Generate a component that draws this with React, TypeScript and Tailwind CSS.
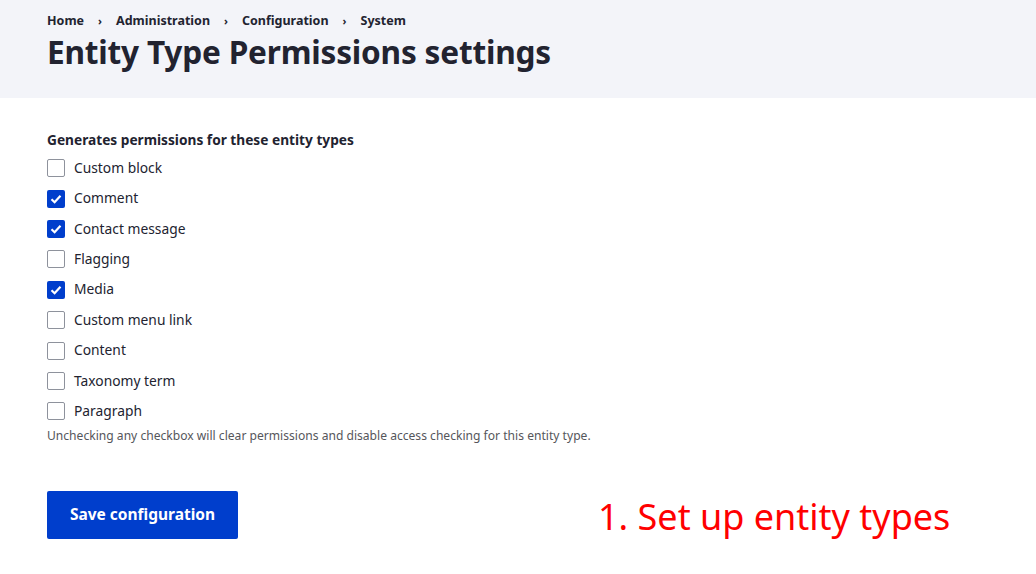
const FONT = "font-['Noto_Sans','Open_Sans',sans-serif]";

const types: { label: string; checked: boolean }[] = [
  { label: "Custom block", checked: false },
  { label: "Comment", checked: true },
  { label: "Contact message", checked: true },
  { label: "Flagging", checked: false },
  { label: "Media", checked: true },
  { label: "Custom menu link", checked: false },
  { label: "Content", checked: false },
  { label: "Taxonomy term", checked: false },
  { label: "Paragraph", checked: false },
];

function Checkbox({ checked }: { checked: boolean }) {
  if (checked) {
    return (
      <span className="flex h-[18px] w-[18px] items-center justify-center rounded-[2px] bg-[#003ecc]">
        <svg width="12" height="10" viewBox="0 0 12 10" fill="none">
          <path d="M1.5 5.2 4.6 8.2 10.5 1.8" stroke="#fff" strokeWidth="2.2" />
        </svg>
      </span>
    );
  }
  return <span className="h-[18px] w-[18px] rounded-[2px] border border-[#8e929c] bg-white" />;
}

export default function App() {
  return (
    <div className={`min-h-[574px] bg-white text-[#222330] ${FONT}`}>
      {/* Page header */}
      <div className="h-[98px] bg-[#f3f4f9] px-[47px] pt-[12px]">
        <nav className="flex items-center text-[12.5px] font-bold leading-[18px]">
          <span>Home</span>
          <span className="px-[14px] text-[11px]">›</span>
          <span>Administration</span>
          <span className="px-[14px] text-[11px]">›</span>
          <span>Configuration</span>
          <span className="px-[14px] text-[11px]">›</span>
          <span>System</span>
        </nav>
        <h1 className="mt-[2px] text-[31.6px] font-bold leading-[40px] tracking-[-0.2px]">
          Entity Type Permissions settings
        </h1>
      </div>

      {/* Form */}
      <div className="px-[47px] pt-[33px]">
        <div className="text-[13.7px] font-bold leading-[18px]">Generates permissions for these entity types</div>
        <div className="mt-[4px] flex flex-col">
          {types.map((t) => (
            <label key={t.label} className="flex h-[30.4px] items-center gap-[9px] text-[13.8px]">
              <Checkbox checked={t.checked} />
              <span>{t.label}</span>
            </label>
          ))}
        </div>
        <p className="mt-[1px] text-[12.1px] leading-[16px] text-[#55565b]">
          Unchecking any checkbox will clear permissions and disable access checking for this entity type.
        </p>

        <div className="mt-[45px] flex items-center">
          <button className="h-[48px] w-[191px] rounded-[2px] bg-[#003ecc] text-[15.5px] font-bold text-white">
            Save configuration
          </button>
          <span className="ml-[360px] mt-[4px] text-[36px] leading-[48px] text-[#ff0000]">1. Set up entity types</span>
        </div>
      </div>
    </div>
  );
}
